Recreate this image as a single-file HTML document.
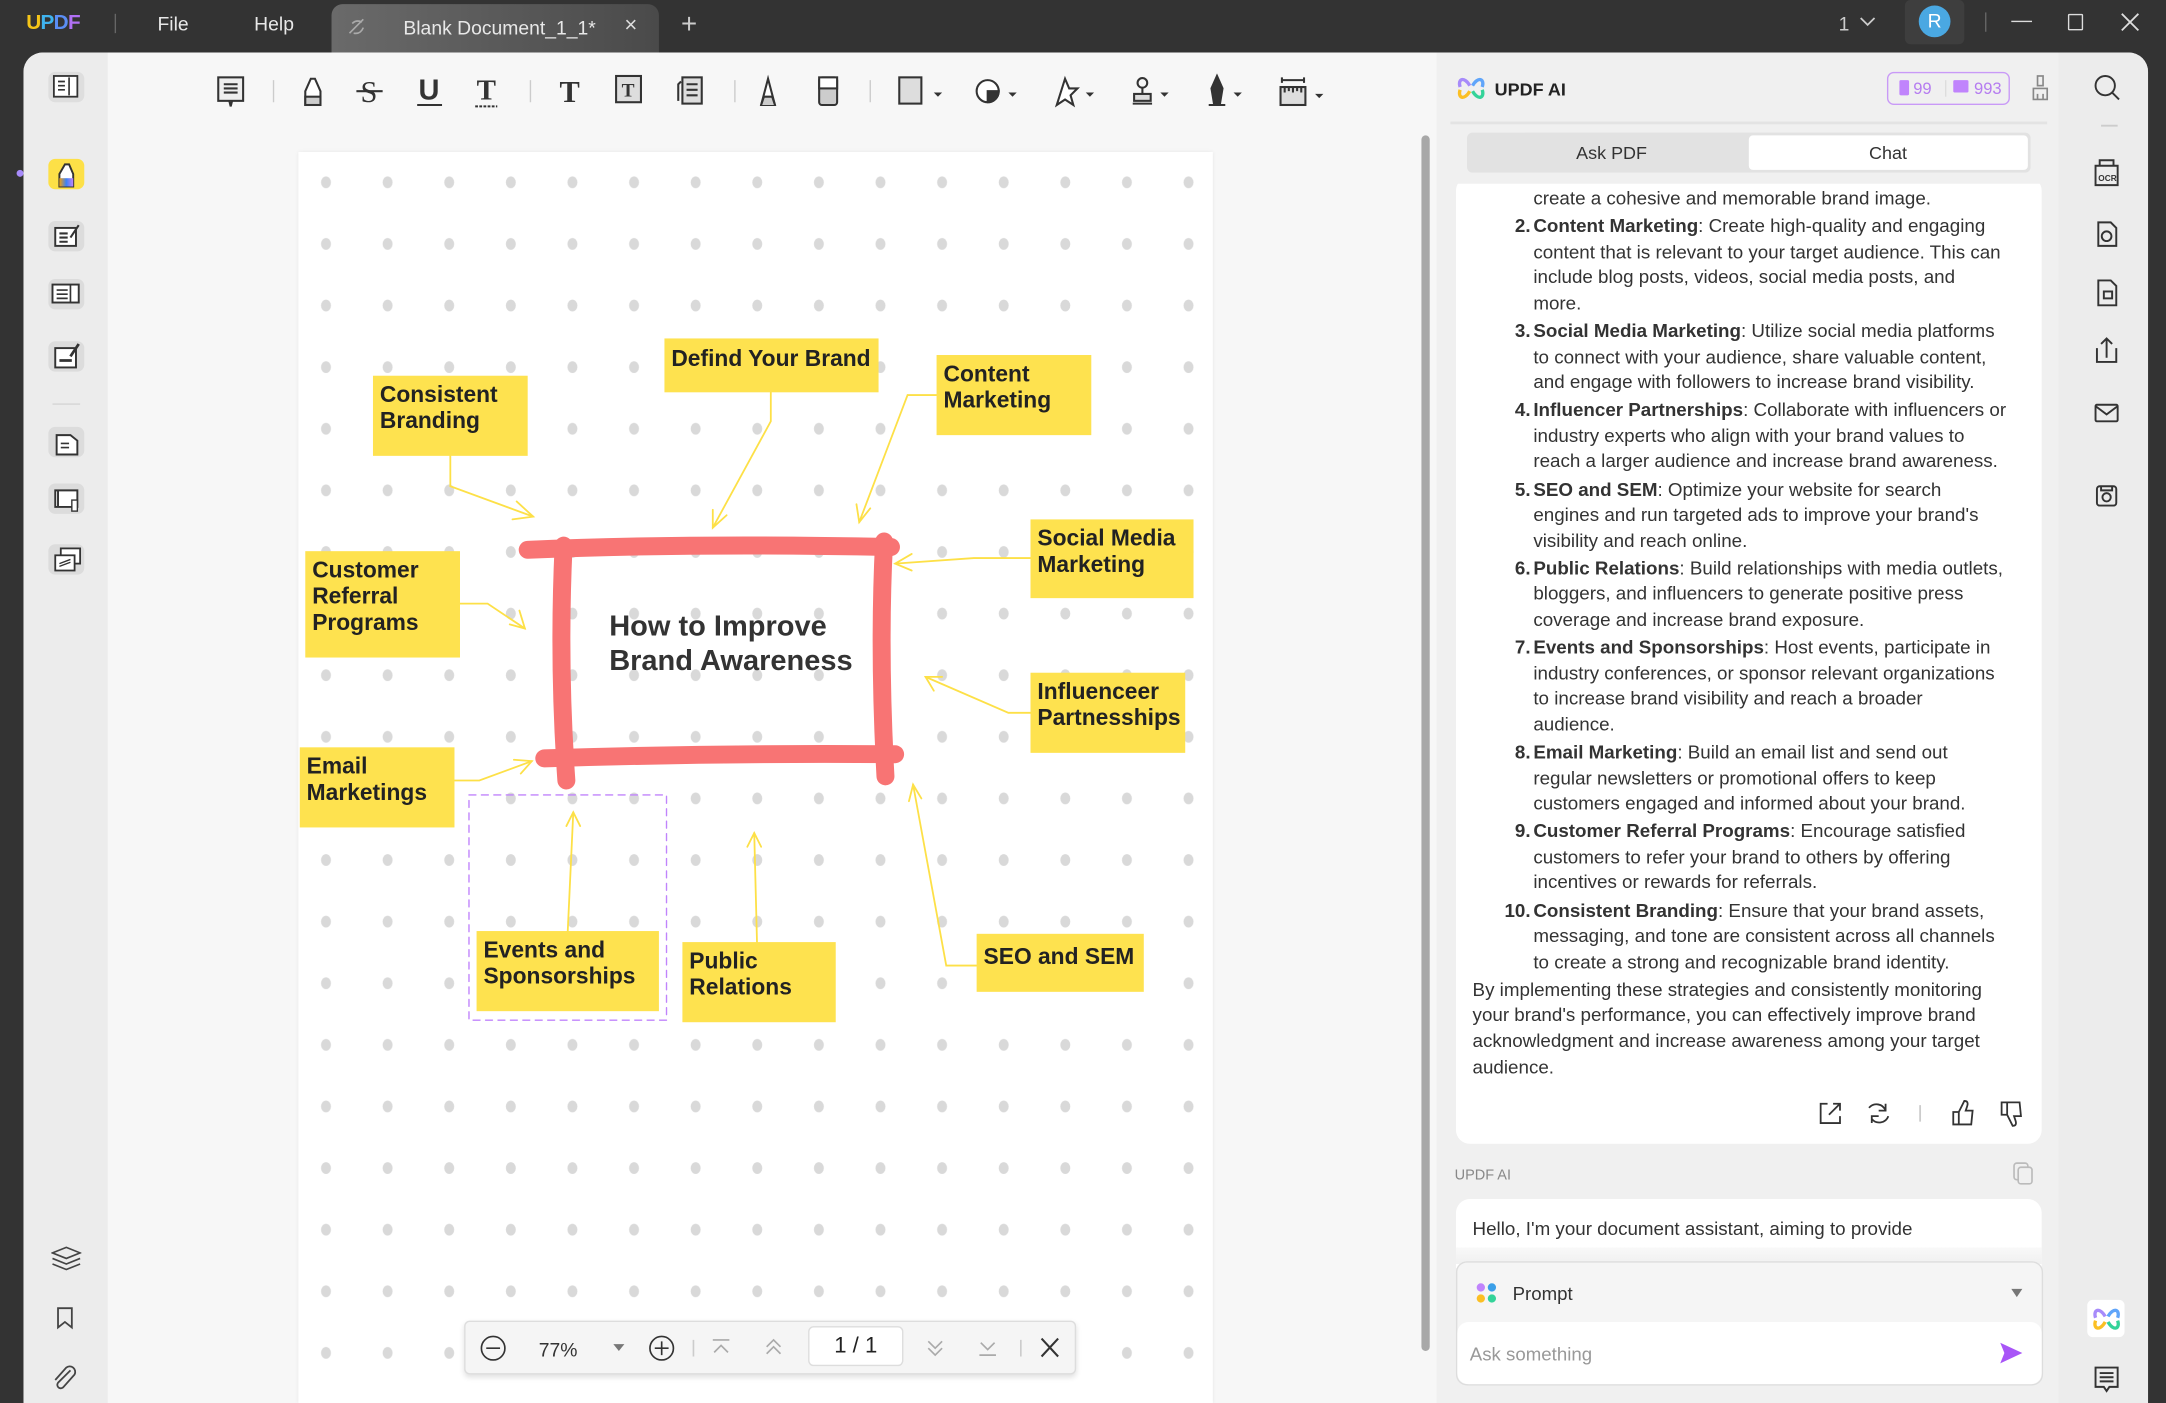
<!DOCTYPE html>
<html><head><meta charset="utf-8">
<style>
*{box-sizing:border-box;margin:0;padding:0}
html,body{width:2166px;height:1403px;overflow:hidden;background:#333}
#root{position:absolute;left:0;top:0;width:1568px;height:1016px;transform:scale(1.381378);transform-origin:0 0;font-family:"Liberation Sans",sans-serif;background:#333;overflow:hidden}
.a{position:absolute}
.t{color:#e8e8e8;font-size:14px}
.box{position:absolute;background:#fee24f;font-weight:bold;font-size:16.5px;line-height:19px;color:#222;padding:5px 5px}
.chat{position:absolute;left:1054px;top:128px;width:424px;height:700px;background:#fff;border-radius:10px;font-size:13.6px;color:#333;line-height:18.6px;padding:6px 12px 0 12px;overflow:hidden;white-space:nowrap}
.it{position:relative;padding-left:44px;margin-top:1.5px}
.it .n{position:absolute;left:12px;width:30px;text-align:right;font-weight:bold}
.it b{font-weight:bold}
.sb{position:absolute;left:35px;width:26px;height:22px;border-radius:5px;background:#dcdcdc}
</style></head><body><div id="root">
<!-- title bar -->
<div class="a" style="left:19px;top:8px;font-size:15px;font-weight:bold;letter-spacing:-0.5px"><span style="color:#f5c518">U</span><span style="color:#3fb3ef">P</span><span style="color:#5b8ef5">D</span><span style="color:#b170f5">F</span></div>
<div class="a" style="left:83px;top:10px;width:1px;height:14px;background:#666"></div>
<div class="a t" style="left:114px;top:9px">File</div>
<div class="a t" style="left:184px;top:9px">Help</div>
<div class="a" style="left:240px;top:3px;width:237px;height:35px;border-radius:8px 8px 0 0;background:linear-gradient(90deg,#6a6a6a,#4a4a4a)"></div>
<svg class="a" style="left:250px;top:12px" width="18" height="16"><path d="M3 12 L13 2 M5 5 Q8 2 12 4 M6 12 Q11 13 13 8" stroke="#aaa" fill="none" stroke-width="1.2"/></svg>
<div class="a t" style="left:292px;top:12px">Blank Document_1_1*</div>
<div class="a t" style="left:452px;top:10px;font-size:16px;color:#ddd">×</div>
<div class="a t" style="left:493px;top:7px;font-size:20px;color:#ccc;font-weight:300">+</div>
<div class="a t" style="left:1331px;top:9px;color:#ccc">1</div>
<svg class="a" style="left:1346px;top:12px" width="12" height="8"><path d="M1 1 L6 6 L11 1" stroke="#ccc" fill="none" stroke-width="1.3"/></svg>
<div class="a" style="left:1379px;top:0;width:43px;height:32px;background:#3e3e3e;border-radius:4px"></div>
<div class="a" style="left:1389px;top:4px;width:23px;height:23px;border-radius:50%;background:#4aa8e2;color:#fff;font-size:14px;text-align:center;line-height:23px">R</div>
<div class="a" style="left:1437px;top:9px;width:1px;height:14px;background:#666"></div>
<div class="a" style="left:1456px;top:15px;width:15px;height:1.3px;background:#ddd"></div>
<div class="a" style="left:1497px;top:10px;width:11px;height:12px;border:1.3px solid #ddd;border-radius:1px"></div>
<svg class="a" style="left:1535px;top:9px" width="14" height="14"><path d="M1 1 L13 13 M13 1 L1 13" stroke="#ddd" stroke-width="1.3"/></svg>

<!-- main -->
<div class="a" style="left:17px;top:38px;width:1538px;height:978px;background:#f7f7f7;border-radius:14px 14px 0 0;overflow:hidden">
 <div class="a" style="left:0;top:0;width:61px;height:978px;background:#ececec"></div>
 <div class="a" style="left:1023px;top:0;width:450px;height:978px;background:#f0f0f0"></div>
 <div class="a" style="left:1473px;top:0;width:65px;height:978px;background:#ececec"></div>
</div>
<!-- left sidebar icons -->
<div class="sb" style="top:52px;background:#dedede"></div>
<svg class="a" style="left:38px;top:54px" width="20" height="18"><rect x="1" y="1" width="17" height="15" fill="#fff" stroke="#333" stroke-width="1.3"/><path d="M4 5h5M4 8h5M4 11h5M12 2v13" stroke="#333" stroke-width="1.2"/></svg>
<div class="a" style="left:12px;top:123px;width:5px;height:5px;border-radius:50%;background:#a78bfa"></div>
<div class="sb" style="top:115px;background:#fde047"></div>
<svg class="a" style="left:38px;top:115px" width="20" height="22"><path d="M5 20V11L9 4H12L15 11V20Z" fill="#fff" stroke="#333" stroke-width="1.4"/><rect x="5" y="14" width="10" height="6" fill="url(#rb)"/><defs><linearGradient id="rb"><stop offset="0" stop-color="#f59e0b"/><stop offset=".5" stop-color="#3b82f6"/><stop offset="1" stop-color="#c084fc"/></linearGradient></defs></svg>
<div class="sb" style="top:160px"></div>
<svg class="a" style="left:38px;top:160px" width="22" height="20"><rect x="2" y="5" width="15" height="13" fill="#fff" stroke="#333" stroke-width="1.4"/><path d="M5 9h6M5 12h6M5 15h6M13 12L19 3" stroke="#333" stroke-width="1.5"/></svg>
<div class="sb" style="top:202px"></div>
<svg class="a" style="left:37px;top:204px" width="22" height="18"><rect x="1" y="2" width="19" height="13" fill="#fff" stroke="#333" stroke-width="1.4"/><path d="M4 6h8M4 9h8M4 12h8M14 2v13" stroke="#333" stroke-width="1.2"/></svg>
<div class="sb" style="top:247px"></div>
<svg class="a" style="left:38px;top:246px" width="22" height="22"><rect x="2" y="6" width="15" height="14" fill="#fff" stroke="#333" stroke-width="1.4"/><path d="M5 15h9M13 12L19 3" stroke="#333" stroke-width="2"/></svg>
<div class="a" style="left:38px;top:292px;width:20px;height:1px;background:#d5d5d5"></div>
<div class="sb" style="top:309px"></div>
<svg class="a" style="left:38px;top:310px" width="22" height="20"><path d="M3 5h10l5 4v10H3Z" fill="#fff" stroke="#333" stroke-width="1.4"/><path d="M6 11h6M6 14h6" stroke="#333" stroke-width="1.2"/></svg>
<div class="sb" style="top:350px"></div>
<svg class="a" style="left:37px;top:351px" width="24" height="20"><path d="M3 4h16v12H3Z M5 4V16" fill="#fff" stroke="#333" stroke-width="1.4"/><rect x="15" y="11" width="4" height="8" fill="#fff" stroke="#333"/></svg>
<div class="sb" style="top:394px"></div>
<svg class="a" style="left:37px;top:395px" width="24" height="20"><rect x="7" y="2" width="14" height="11" fill="#fff" stroke="#333" stroke-width="1.3"/><rect x="3" y="7" width="14" height="11" fill="#fff" stroke="#333" stroke-width="1.3"/><path d="M6 13l8-3M6 15l8-3" stroke="#333"/></svg>
<svg class="a" style="left:37px;top:900px" width="22" height="20"><path d="M1 7L11 3L21 7L11 11Z M1 11L11 15L21 11 M1 15L11 19L21 15" fill="none" stroke="#444" stroke-width="1.2"/></svg>
<svg class="a" style="left:40px;top:945px" width="14" height="18"><path d="M2 2h10v14l-5-4-5 4Z" fill="none" stroke="#444" stroke-width="1.3"/></svg>
<svg class="a" style="left:37px;top:988px" width="20" height="20"><path d="M14 4L5 13a2.5 2.5 0 0 0 4 3l8-9a4 4 0 0 0-6-5L3 11" fill="none" stroke="#444" stroke-width="1.3"/></svg>

<!-- toolbar -->
<svg class="a" style="left:150px;top:50px" width="820" height="32" fill="none" stroke="#333" stroke-width="1.5">
 <g transform="translate(8,5)"><rect x="0" y="1" width="18" height="17" fill="#eee"/><path d="M4 6h10M4 9h10M4 12h10M8 18l1 4 1-4"/></g>
 <line x1="48" y1="8" x2="48" y2="24" stroke="#ccc" stroke-width="1"/>
 <g transform="translate(70,4)"><path d="M1 22V12L5 3H8L12 12V22Z" fill="#fff"/><rect x="1" y="16" width="11" height="6" fill="#ccc"/></g>
 <text x="111" y="24" font-size="22" fill="#333" stroke="none" font-family="Liberation Serif">S</text><line x1="108" y1="16" x2="127" y2="16"/>
 <text x="153" y="22" font-size="21" fill="#333" stroke="none" font-family="Liberation Sans" font-weight="bold">U</text><line x1="152" y1="26" x2="170" y2="26"/>
 <text x="195" y="22" font-size="21" fill="#333" stroke="none" font-family="Liberation Serif" font-weight="bold">T</text><path d="M194 27h16" stroke-dasharray="2 1"/>
 <line x1="234" y1="8" x2="234" y2="24" stroke="#ccc" stroke-width="1"/>
 <text x="255" y="24" font-size="22" fill="#333" stroke="none" font-family="Liberation Serif" font-weight="bold">T</text>
 <g transform="translate(296,5)"><rect x="0" y="0" width="18" height="19" fill="#ddd"/><text x="4" y="15" font-size="14" fill="#333" stroke="none" font-weight="bold" font-family="Liberation Serif">T</text></g>
 <g transform="translate(340,5)"><rect x="4" y="1" width="14" height="19" fill="#ddd"/><path d="M7 6h8M7 10h8M7 14h8M1 18V6l2-2"/></g>
 <line x1="382" y1="8" x2="382" y2="24" stroke="#ccc" stroke-width="1"/>
 <g transform="translate(400,4)"><path d="M1 22L6 3L11 22Z" fill="#fff"/><path d="M1 22L3 16H9L11 22" fill="#ccc"/></g>
 <g transform="translate(443,4)"><rect x="0" y="2" width="13" height="20" rx="2" fill="#ccc"/><rect x="0" y="2" width="13" height="8" fill="#fff"/></g>
 <line x1="480" y1="8" x2="480" y2="24" stroke="#ccc" stroke-width="1"/>
 <g transform="translate(501,6)"><rect x="0" y="0" width="16" height="19" fill="#ddd"/><path d="M25 11l3 3 3-3" fill="#333" stroke="none"/></g>
 <g transform="translate(556,6)"><circle cx="9" cy="10" r="8" fill="#fff"/><path d="M9 18A8 8 0 0 0 17 10L9 10Z" fill="#333"/><path d="M24 11l3 3 3-3" fill="#333" stroke="none"/></g>
 <g transform="translate(612,6)"><path d="M9 1L12 8L18 8L13 13L15 20L9 16L3 20Z" fill="#fff"/><path d="M24 11l3 3 3-3" fill="#333" stroke="none"/></g>
 <g transform="translate(668,5)"><circle cx="9" cy="5" r="3.5"/><path d="M9 9v4"/><rect x="3" y="13" width="12" height="5" fill="#ddd"/><path d="M2 20h14"/><path d="M22 12l3 3 3-3" fill="#333" stroke="none"/></g>
 <g transform="translate(723,4)"><path d="M8 1L12 10L10 22H6L4 10Z" fill="#333"/><path d="M2 22h12"/><path d="M20 13l3 3 3-3" fill="#333" stroke="none"/></g>
 <g transform="translate(776,6)"><path d="M2 2h16M2 0v4M18 0v4"/><rect x="1" y="7" width="18" height="13" fill="#ddd"/><path d="M4 7v4M7 7v3M10 7v4M13 7v3M16 7v4"/><path d="M26 12l3 3 3-3" fill="#333" stroke="none"/></g>
</svg>

<!-- page -->
<div class="a" style="left:216px;top:110px;width:662px;height:906px;background:#fff;box-shadow:0 0 3px rgba(0,0,0,.08)"></div>
<svg class="a" style="left:216px;top:110px" width="662" height="906">
 <defs><pattern id="dots" x="0" y="0" width="44.6" height="44.6" patternUnits="userSpaceOnUse"><ellipse cx="20" cy="22" rx="3.6" ry="4.3" fill="#d9d9d9"/></pattern></defs>
 <rect width="662" height="906" fill="url(#dots)"/>
</svg>
<div class="a" style="left:1029px;top:98px;width:6px;height:880px;border-radius:3px;background:#a8a8a8"></div>

<!-- red frame -->
<svg class="a" style="left:0;top:0" width="1040" height="1016" fill="none" stroke-linecap="round">
 <g stroke="#f87474" stroke-width="13">
  <path d="M382 398 Q500 393 645 396"/>
  <path d="M408 395 Q404 480 410 565"/>
  <path d="M640 392 Q636 470 641 562"/>
  <path d="M394 549 Q520 545 648 546"/>
 </g>
 <rect x="339.5" y="575.5" width="143" height="163" stroke="#c084fc" stroke-dasharray="5 4" stroke-width="1"/>
 <g stroke="#fde047" stroke-width="1.3">
  <path d="M326 330V352L386 374"/><path d="M374 363L386 374L371 376"/>
  <path d="M558 284V305L516 382"/><path d="M516 369L516 382L526 373"/>
  <path d="M678 286H657L622 378"/><path d="M620 365L622 378L630 368"/>
  <path d="M746 404H705L648 408"/><path d="M660 401L648 408L660 413"/>
  <path d="M333 437H353L380 455"/><path d="M376 442L380 455L369 452"/>
  <path d="M746 516H730L670 490"/><path d="M676 500L670 490L682 490"/>
  <path d="M329 565H347L385 551"/><path d="M372 550L385 551L377 560"/>
  <path d="M411 674L415 588"/><path d="M410 598L415 588L420 598"/>
  <path d="M548 682L546 603"/><path d="M541 613L546 603L551 613"/>
  <path d="M707 699H685L661 568"/><path d="M658 580L661 568L667 578"/>
 </g>
</svg>
<div class="box" style="left:270px;top:272px;width:112px;height:58px">Consistent<br>Branding</div>
<div class="box" style="left:481px;top:245px;width:155px;height:39px;padding-top:6px">Defind Your Brand</div>
<div class="box" style="left:678px;top:257px;width:112px;height:58px">Content<br>Marketing</div>
<div class="box" style="left:746px;top:376px;width:118px;height:57px">Social Media<br>Marketing</div>
<div class="box" style="left:221px;top:399px;width:112px;height:77px">Customer<br>Referral<br>Programs</div>
<div class="box" style="left:746px;top:487px;width:112px;height:58px">Influenceer<br>Partnesships</div>
<div class="box" style="left:217px;top:541px;width:112px;height:58px">Email<br>Marketings</div>
<div class="box" style="left:345px;top:674px;width:132px;height:58px">Events and<br>Sponsorships</div>
<div class="box" style="left:494px;top:682px;width:111px;height:58px">Public<br>Relations</div>
<div class="box" style="left:707px;top:676px;width:121px;height:42px;padding-top:8px">SEO and SEM</div>
<div class="a" style="left:441px;top:441px;font-size:21px;font-weight:bold;color:#333;line-height:25px">How to Improve<br>Brand Awareness</div>

<!-- zoom bar -->
<div class="a" style="left:336px;top:956px;width:443px;height:39px;background:#f5f5f5;border:1px solid #ddd;border-radius:4px;box-shadow:0 2px 4px rgba(0,0,0,.12)"></div>
<svg class="a" style="left:336px;top:956px" width="443" height="39" fill="none" stroke="#333" stroke-width="1.2">
 <circle cx="21" cy="20" r="8.5"/><path d="M16 20h10"/>
 <text x="54" y="26" font-size="14" fill="#333" stroke="none" font-family="Liberation Sans">77%</text>
 <path d="M108 17h8l-4 5z" fill="#777" stroke="none"/>
 <circle cx="143" cy="20" r="8.5"/><path d="M138 20h10M143 15v10"/>
 <path d="M166 14v12" stroke="#ccc"/>
 <path d="M180 14h12M181 23l5-5 5 5M219 19l5-5 5 5M219 24l5-5 5 5" stroke="#aaa"/>
 <path d="M336 15l5 5 5-5M336 20l5 5 5-5M374 16l5 5 5-5M373 25h12" stroke="#aaa"/>
 <path d="M403 14v12" stroke="#ccc"/>
 <path d="M418 13l12 13M430 13l-12 13" stroke-width="1.5"/>
</svg>
<div class="a" style="left:585px;top:960px;width:69px;height:29px;background:#fff;border:1px solid #ddd;border-radius:4px;font-size:16px;text-align:center;line-height:28px;color:#222">1 / 1</div>

<!-- AI panel -->
<svg class="a" style="left:1054px;top:53px" width="22" height="22" fill="none" stroke-width="2.4"><path d="M10 9C6 2 1 4 3 10" stroke="#a78bfa"/><path d="M12 9C16 2 21 4 19 10" stroke="#60a5fa"/><path d="M10 13C6 20 1 18 3 12" stroke="#fbbf24"/><path d="M12 13C16 20 21 18 19 12" stroke="#34d399"/></svg>
<div class="a" style="left:1082px;top:57px;font-size:13px;font-weight:bold;color:#222">UPDF AI</div>
<div class="a" style="left:1366px;top:52px;width:89px;height:24px;border:1px solid #c99af7;border-radius:5px"></div>
<div class="a" style="left:1375px;top:58px;width:7px;height:11px;background:#c084fc;border-radius:1px"></div>
<div class="a" style="left:1385px;top:57px;font-size:12px;color:#b57cf0">99</div>
<div class="a" style="left:1408px;top:58px;width:1px;height:12px;background:#ddd"></div>
<div class="a" style="left:1414px;top:58px;width:11px;height:9px;background:#c084fc;border-radius:1px"></div>
<div class="a" style="left:1429px;top:57px;font-size:12px;color:#b57cf0">993</div>
<svg class="a" style="left:1470px;top:54px" width="14" height="20" fill="none" stroke="#888" stroke-width="1.2"><rect x="5" y="1" width="4" height="7"/><path d="M2 10h10v8H2Z M5 14v4M9 14v4"/></svg>
<div class="a" style="left:1050px;top:88px;width:432px;height:2px;background:#e3e3e3"></div>
<div class="a" style="left:1062px;top:96px;width:408px;height:29px;background:#e2e2e2;border-radius:4px"></div>
<div class="a" style="left:1266px;top:98px;width:202px;height:25px;background:#fff;border-radius:3px"></div>
<div class="a" style="left:1141px;top:103px;font-size:13px;color:#333">Ask PDF</div>
<div class="a" style="left:1353px;top:103px;font-size:13px;color:#333">Chat</div>

<div class="chat">
<div style="padding-left:44px;margin-top:1px">create a cohesive and memorable brand image.</div>
<div class="it"><span class="n">2.</span><b>Content Marketing</b>: Create high-quality and engaging<br>content that is relevant to your target audience. This can<br>include blog posts, videos, social media posts, and<br>more.</div>
<div class="it"><span class="n">3.</span><b>Social Media Marketing</b>: Utilize social media platforms<br>to connect with your audience, share valuable content,<br>and engage with followers to increase brand visibility.</div>
<div class="it"><span class="n">4.</span><b>Influencer Partnerships</b>: Collaborate with influencers or<br>industry experts who align with your brand values to<br>reach a larger audience and increase brand awareness.</div>
<div class="it"><span class="n">5.</span><b>SEO and SEM</b>: Optimize your website for search<br>engines and run targeted ads to improve your brand's<br>visibility and reach online.</div>
<div class="it"><span class="n">6.</span><b>Public Relations</b>: Build relationships with media outlets,<br>bloggers, and influencers to generate positive press<br>coverage and increase brand exposure.</div>
<div class="it"><span class="n">7.</span><b>Events and Sponsorships</b>: Host events, participate in<br>industry conferences, or sponsor relevant organizations<br>to increase brand visibility and reach a broader<br>audience.</div>
<div class="it"><span class="n">8.</span><b>Email Marketing</b>: Build an email list and send out<br>regular newsletters or promotional offers to keep<br>customers engaged and informed about your brand.</div>
<div class="it"><span class="n">9.</span><b>Customer Referral Programs</b>: Encourage satisfied<br>customers to refer your brand to others by offering<br>incentives or rewards for referrals.</div>
<div class="it"><span class="n">10.</span><b>Consistent Branding</b>: Ensure that your brand assets,<br>messaging, and tone are consistent across all channels<br>to create a strong and recognizable brand identity.</div>
<div style="margin-top:1.5px">By implementing these strategies and consistently monitoring<br>your brand's performance, you can effectively improve brand<br>acknowledgment and increase awareness among your target<br>audience.</div>
</div>
<div class="a" style="left:1054px;top:125px;width:424px;height:8px;background:#f0f0f0"></div>
<svg class="a" style="left:1315px;top:795px" width="160" height="22" fill="none" stroke="#333" stroke-width="1.3">
 <path d="M8 4H3v14h14v-5M9 12L17 4M12 4h5v5"/>
 <path d="M38 7a7 7 0 0 1 12 2M52 13a7 7 0 0 1-12 2M50 4v5h-5M40 18v-5h5"/>
 <path d="M75 5v12" stroke="#ccc"/>
 <path d="M99 10h4V19h-4ZM103 10l4-8c2 0 3 1 2 4l-1 3h5l-1 10h-9"/>
 <path d="M134 12h4V3h-4ZM138 12l4 8c2 0 3-1 2-4l-1-3h5l-1-10h-9"/>
</svg>
<div class="a" style="left:1053px;top:845px;font-size:10.5px;color:#888">UPDF AI</div>
<svg class="a" style="left:1457px;top:841px" width="16" height="17" fill="none" stroke="#bbb" stroke-width="1.2"><rect x="1" y="1" width="10" height="12" rx="2"/><rect x="4" y="4" width="10" height="12" rx="2" fill="#f0f0f0"/></svg>
<div class="a" style="left:1054px;top:868px;width:424px;height:50px;background:#fff;border-radius:10px 10px 0 0"></div>
<div class="a" style="left:1066px;top:882px;font-size:13.6px;color:#333">Hello, I'm your document assistant, aiming to provide</div>
<div class="a" style="left:1054px;top:903px;width:424px;height:12px;background:linear-gradient(rgba(240,240,240,.4),#f0f0f0)"></div>
<div class="a" style="left:1054px;top:913px;width:425px;height:90px;background:#f5f5f5;border:1px solid #ddd;border-radius:8px"></div>
<div class="a" style="left:1055px;top:957px;width:423px;height:45px;background:#fff;border-radius:8px"></div>
<div class="a" style="left:1069px;top:929px;width:6px;height:6px;border-radius:50%;background:#c084fc"></div>
<div class="a" style="left:1077px;top:929px;width:6px;height:6px;border-radius:50%;background:#3b9fe8"></div>
<div class="a" style="left:1069px;top:937px;width:6px;height:6px;border-radius:50%;background:#fbbf24"></div>
<div class="a" style="left:1077px;top:937px;width:6px;height:6px;border-radius:50%;background:#34d399"></div>
<div class="a" style="left:1095px;top:929px;font-size:13.5px;color:#333">Prompt</div>
<svg class="a" style="left:1455px;top:932px" width="10" height="8"><path d="M1 1h8l-4 6z" fill="#777"/></svg>
<div class="a" style="left:1064px;top:973px;font-size:13.5px;color:#999">Ask something</div>
<svg class="a" style="left:1447px;top:971px" width="18" height="17"><path d="M1 1L17 8.5L1 16L4 8.5Z" fill="#a855f7"/></svg>

<!-- right sidebar -->
<svg class="a" style="left:1512px;top:50px" width="30" height="960" fill="none" stroke="#333" stroke-width="1.4">
 <circle cx="12" cy="12" r="7"/><path d="M17 17l5 5"/>
 <path d="M9 41h12" stroke="#ccc"/>
 <path d="M8 70V66h10v4M5 70h16v14H5Z"/><text x="7" y="81" font-size="6" fill="#333" stroke="none" font-weight="bold">OCR</text>
 <path d="M7 111h9l4 4v13H7Z"/><circle cx="13" cy="121" r="3.5"/>
 <path d="M7 153h9l4 4v14H7Z"/><rect x="11" y="161" width="6" height="5"/>
 <path d="M6 202v10h14v-10M13 209V196M9 199l4-4 4 4"/>
 <rect x="5" y="243" width="16" height="12" rx="1"/><path d="M5 244l8 6 8-6"/>
 <rect x="6" y="302" width="14" height="14" rx="2"/><circle cx="13" cy="310" r="3"/><path d="M9 302v3h8v-3"/>
</svg>
<div class="a" style="left:1511px;top:941px;width:27px;height:27px;background:#fff;border-radius:4px"></div>
<svg class="a" style="left:1514px;top:944px" width="22" height="22" fill="none" stroke-width="2.4"><path d="M10 9C6 2 1 4 3 10" stroke="#a78bfa"/><path d="M12 9C16 2 21 4 19 10" stroke="#60a5fa"/><path d="M10 13C6 20 1 18 3 12" stroke="#fbbf24"/><path d="M12 13C16 20 21 18 19 12" stroke="#34d399"/></svg>
<svg class="a" style="left:1515px;top:988px" width="20" height="22" fill="none" stroke="#333" stroke-width="1.4"><path d="M2 2h16v14h-6l-2 3-2-3H2Z"/><path d="M5 6h10M5 9h10M5 12h10"/></svg>
</div></body></html>
